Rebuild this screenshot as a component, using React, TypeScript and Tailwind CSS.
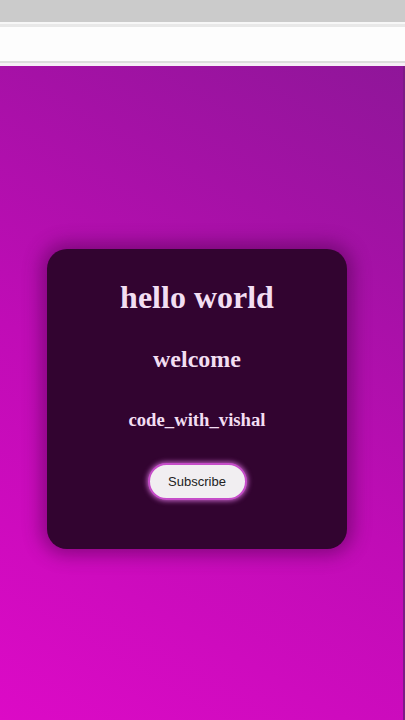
export default function App() {
  return (
    <div className="flex h-[720px] w-[405px] flex-col overflow-hidden bg-white">
      {/* browser chrome */}
      <div className="h-[22px] bg-[#cbcbcb]" />
      <div className="h-[5px] border-t-2 border-[#f7f7f7] bg-[#e8e8e8]" />
      <div className="h-[34px] bg-[#fdfdfd]" />
      <div className="h-[2px] bg-[#dcdcdc]" />
      <div className="h-[3px] bg-[#f6eef6]" />

      {/* page */}
      <div className="flex flex-1 bg-[linear-gradient(30deg,#dc0ac6_0%,#c00cb6_45%,#a511a6_75%,#8f1699_100%)]">
        <div className="flex flex-1 pl-[47px] pt-[183px]">
          <div className="flex h-[300px] w-[300px] flex-col items-center rounded-[20px] bg-[#320430] pt-[30px] text-[#f2def2] shadow-[0_0_18px_6px_rgba(60,0,60,0.45)] [font-family:'Liberation_Serif',serif]">
            <h1 className="text-[32px] font-bold leading-[36px]">hello world</h1>
            <h2 className="mt-[30px] text-[24px] font-bold leading-[28px]">welcome</h2>
            <h3 className="mt-[36px] text-[18.7px] font-bold leading-[22px]">code_with_vishal</h3>
            <button className="mt-[32px] flex h-[37px] w-[99px] items-center justify-center rounded-full border-2 border-[#c54cc8] bg-[#f1eef1] text-[13px] text-[#222] shadow-[0_0_5px_1px_rgba(230,120,235,0.8)] [font-family:'Liberation_Sans',Arial,sans-serif]">
              Subscribe
            </button>
          </div>
        </div>
        <div className="w-[2px] bg-[#7d1a86]" />
      </div>
    </div>
  );
}
